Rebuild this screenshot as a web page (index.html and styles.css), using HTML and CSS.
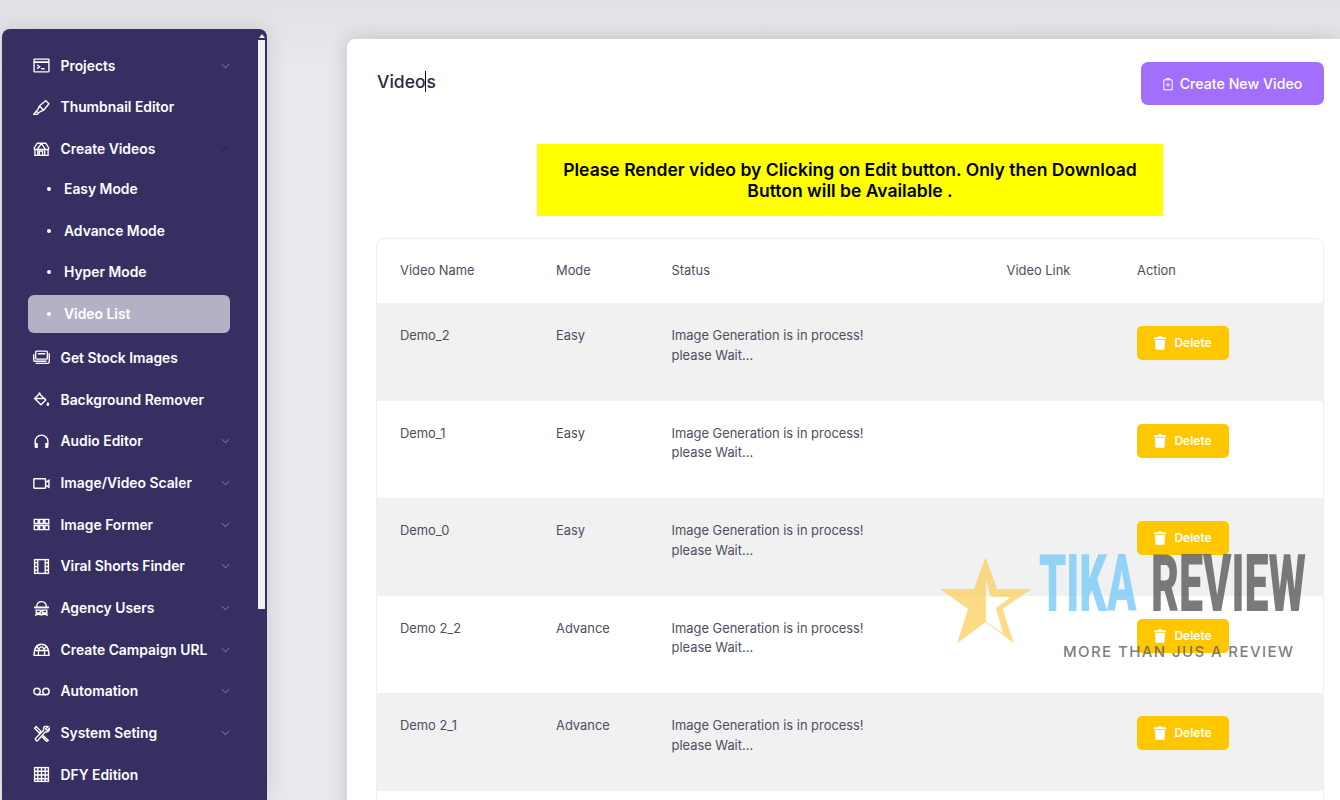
FILE: index.html
```html
<!DOCTYPE html>
<html lang="en">
<head>
<meta charset="utf-8">
<title>Videos</title>
<link rel="stylesheet" href="styles.css">
</head>
<body>
<aside class="sidebar">
  <div class="scrollbar"><span class="scroll-arrow"></span><span class="scroll-thumb"></span></div>
  <nav class="menu">
    <a class="item"><svg class="icon" viewBox="0 0 16 16"><rect x="1" y="2" width="14" height="12" rx=".6"/><path class="bar" d="M1 4.800h14"/><path d="M3.800 7.500l2.500 1.700-2.500 1.700M7.500 11h3.500"/></svg><span class="label">Projects</span><svg class="chev" viewBox="0 0 10 6"><path d="M1 1l4 4 4-4"/></svg></a>
    <a class="item"><svg class="icon" viewBox="0 0 16 16"><path d="M6 6.500L12 1.500l3 3-5 6-4-4zM6 6.500L4.500 10 3 11.500l2 2L6.500 12 10 10.500M3 11.500L.7 14.500H4l1-1"/></svg><span class="label">Thumbnail Editor</span></a>
    <a class="item"><svg class="icon" viewBox="0 0 16 16"><path d="M.8 8L4 3h8l3.200 5M.8 8l1 1h12.400l1-1M8 3.200L4.500 8v6.500h-2.700V9M4.500 8L8 3.200 11 8v6.500h3.200V9M6 14.500v-4h3v4M4.500 14.500H11"/></svg><span class="label">Create Videos</span><svg class="chev dark" viewBox="0 0 10 6"><path d="M1 5l4-4 4 4"/></svg></a>
    <a class="item sub first-sub"><i class="dot"></i><span class="label">Easy Mode</span></a>
    <a class="item sub"><i class="dot"></i><span class="label">Advance Mode</span></a>
    <a class="item sub"><i class="dot"></i><span class="label">Hyper Mode</span></a>
    <a class="item sub active"><i class="dot"></i><span class="label">Video List</span></a>
    <a class="item"><svg class="icon" viewBox="0 0 16 16"><rect x="2.500" y="2" width="11" height="7.500" rx=".8"/><path d="M.7 5v5.500a1 1 0 001 1h11M15.300 4v7.500a2 2 0 01-1 2H2.500M4.500 4.500h7"/></svg><span class="label">Get Stock Images</span></a>
    <a class="item"><svg class="icon" viewBox="0 0 16 16"><path d="M6 2.500l6 6-4.500 4.500-6-6zM2 7h9.800M5.500 1.500L7 3"/><path class="solid" d="M14 10c.8 1.200 1.300 2 1.300 2.800a1.300 1.300 0 01-2.600 0c0-.8.500-1.600 1.300-2.800z"/></svg><span class="label">Background Remover</span></a>
    <a class="item"><svg class="icon" viewBox="0 0 16 16"><path d="M2 10V8a6 6 0 0112 0v2"/><path class="solid" d="M1.500 9.500h3v4.500h-2a1 1 0 01-1-1zM14.500 9.500h-3v4.500h2a1 1 0 001-1z"/></svg><span class="label">Audio Editor</span><svg class="chev" viewBox="0 0 10 6"><path d="M1 1l4 4 4-4"/></svg></a>
    <a class="item"><svg class="icon" viewBox="0 0 16 16"><rect x=".8" y="3.500" width="11" height="9" rx=".6"/><path d="M12 7l3-2v6.500l-3-2"/></svg><span class="label">Image/Video Scaler</span><svg class="chev" viewBox="0 0 10 6"><path d="M1 1l4 4 4-4"/></svg></a>
    <a class="item"><svg class="icon" viewBox="0 0 16 16"><path d="M1.200 3.200h3.600v3.800H1.200zM6.200 3.200h3.600v3.800H6.200zM11.200 3.200h3.600v3.800h-3.600zM1.200 9h3.600v3.800H1.200zM6.200 9h3.600v3.800H6.200zM11.200 9h3.600v3.800h-3.600z"/></svg><span class="label">Image Former</span><svg class="chev" viewBox="0 0 10 6"><path d="M1 1l4 4 4-4"/></svg></a>
    <a class="item"><svg class="icon" viewBox="0 0 16 16"><rect x="1.500" y="1.500" width="13" height="13"/><path d="M4.500 1.500v13M11.500 1.500v13M1.500 4.500h3M1.500 8h3M1.500 11.500h3M11.500 4.500h3M11.500 8h3M11.500 11.500h3"/></svg><span class="label">Viral Shorts Finder</span><svg class="chev" viewBox="0 0 10 6"><path d="M1 1l4 4 4-4"/></svg></a>
    <a class="item"><svg class="icon" viewBox="0 0 16 16"><path d="M3.500 6.500C3.500 3 5 1.500 8 1.500s4.500 1.500 4.500 5"/><path class="bar" d="M1 7h14"/><path d="M3 9.500h4v2.700H3zM9 9.500h4v2.700H9zM7 10.300h2M2 14.500c2-1.400 4-1.400 6-.500 2-.9 4-.9 6 .500"/></svg><span class="label">Agency Users</span><svg class="chev" viewBox="0 0 10 6"><path d="M1 1l4 4 4-4"/></svg></a>
    <a class="item"><svg class="icon" viewBox="0 0 16 16"><path d="M1 13.500c0-7 3-10.500 7-10.500s7 3.500 7 10.500zM5 13.500c0-5 1.200-8 3-8s3 3 3 8M2 9h12M3.500 5.500L6 8M12.500 5.500L10 8"/></svg><span class="label">Create Campaign URL</span><svg class="chev" viewBox="0 0 10 6"><path d="M1 1l4 4 4-4"/></svg></a>
    <a class="item"><svg class="icon" viewBox="0 0 16 16"><circle cx="3.800" cy="8" r="3"/><circle cx="12.200" cy="8" r="3"/><path d="M3.800 11h8.400"/></svg><span class="label">Automation</span><svg class="chev" viewBox="0 0 10 6"><path d="M1 1l4 4 4-4"/></svg></a>
    <a class="item"><svg class="icon" viewBox="0 0 16 16"><path d="M1.500 3L3 1.500l4.500 4.500-1.500 1.500zM10.500 1.500c1.500-.5 3 0 3.500 0l-2 2 .5 1 1 .5 2-2c0 1.500-.5 3-2 3.500-1 .3-1.500 0-2 0L4.500 14.500c-1 1-3-1-2-2l7.500-7.500c0-.5-.3-2 .5-3.500zM9.500 10l4.800 4.500-1.500 1L8.500 11"/></svg><span class="label">System Seting</span><svg class="chev" viewBox="0 0 10 6"><path d="M1 1l4 4 4-4"/></svg></a>
    <a class="item"><svg class="icon" viewBox="0 0 16 16"><rect x="1.500" y="1.500" width="13" height="13"/><path d="M4.500 1.500v13M8 1.500v13M11.500 1.500v13M1.500 5h13M1.500 8.500h13M1.500 12h13"/></svg><span class="label">DFY Edition</span></a>
  </nav>
</aside>
<main class="card">
  <header class="card-head">
    <h1 class="title">Video<span class="caret"></span>s</h1>
    <a class="create"><svg class="create-icon" viewBox="0 0 12 16"><path d="M1 3h10v12H1zM4 3V1.500h4V3M6 7v4M4 9h4"/></svg>Create New Video</a>
  </header>
  <div class="notice">Please Render video by Clicking on Edit button. Only then Download Button will be Available .</div>
  <div class="table-box">
    <table class="videos">
      <colgroup><col class="c1"><col class="c2"><col class="c3"><col class="c4"><col class="c5"></colgroup>
      <thead><tr><th>Video Name</th><th>Mode</th><th>Status</th><th>Video Link</th><th>Action</th></tr></thead>
      <tbody>
        <tr><td>Demo_2</td><td>Easy</td><td>Image Generation is in process!<br>please Wait...</td><td></td><td><a class="del"><svg class="trash" viewBox="0 0 14 16"><path d="M5 0h4l.6 1.200H13a1 1 0 011 1V3.500H0V2.200a1 1 0 011-1h3.400zM1 4.500h12l-.7 10.100a1.500 1.500 0 01-1.500 1.400H3.200a1.500 1.500 0 01-1.500-1.400z"/></svg>Delete</a></td></tr>
        <tr><td>Demo_1</td><td>Easy</td><td>Image Generation is in process!<br>please Wait...</td><td></td><td><a class="del"><svg class="trash" viewBox="0 0 14 16"><path d="M5 0h4l.6 1.200H13a1 1 0 011 1V3.500H0V2.200a1 1 0 011-1h3.400zM1 4.500h12l-.7 10.100a1.500 1.500 0 01-1.500 1.400H3.200a1.500 1.500 0 01-1.500-1.400z"/></svg>Delete</a></td></tr>
        <tr><td>Demo_0</td><td>Easy</td><td>Image Generation is in process!<br>please Wait...</td><td></td><td><a class="del"><svg class="trash" viewBox="0 0 14 16"><path d="M5 0h4l.6 1.200H13a1 1 0 011 1V3.500H0V2.200a1 1 0 011-1h3.400zM1 4.500h12l-.7 10.100a1.500 1.500 0 01-1.500 1.400H3.200a1.500 1.500 0 01-1.500-1.400z"/></svg>Delete</a></td></tr>
        <tr><td>Demo 2_2</td><td>Advance</td><td>Image Generation is in process!<br>please Wait...</td><td></td><td><a class="del"><svg class="trash" viewBox="0 0 14 16"><path d="M5 0h4l.6 1.200H13a1 1 0 011 1V3.500H0V2.200a1 1 0 011-1h3.400zM1 4.500h12l-.7 10.100a1.500 1.500 0 01-1.500 1.400H3.200a1.500 1.500 0 01-1.500-1.400z"/></svg>Delete</a></td></tr>
        <tr><td>Demo 2_1</td><td>Advance</td><td>Image Generation is in process!<br>please Wait...</td><td></td><td><a class="del"><svg class="trash" viewBox="0 0 14 16"><path d="M5 0h4l.6 1.200H13a1 1 0 011 1V3.500H0V2.200a1 1 0 011-1h3.400zM1 4.500h12l-.7 10.100a1.500 1.500 0 01-1.500 1.400H3.200a1.500 1.500 0 01-1.500-1.400z"/></svg>Delete</a></td></tr>
        <tr><td></td><td></td><td></td><td></td><td></td></tr>
      </tbody>
    </table>
  </div>
</main>
<div class="watermark">
  <svg class="wm-star" viewBox="0 0 92 88"><path fill-rule="evenodd" d="M45.500 0L57 32H91.500L62.500 52 74 86.500 45.500 65 17 86.500 28 52 0 32H34zM46 23V64.500L63 76.500 56 51 71 40H51z"/></svg>
  <span class="wm-word wm-tika">TIKA</span>
  <span class="wm-word wm-review">REVIEW</span>
  <span class="wm-tag">MORE THAN JUS A REVIEW</span>
</div>
</body>
</html>
```
FILE: styles.css
```css
* { box-sizing: border-box; }
html, body { height: 100%; }
body {
  margin: 0;
  height: 800px;
  overflow: hidden;
  display: flex;
  align-items: flex-start;
  background: linear-gradient(#e1e2e6, #e8eaed 70px);
  font-family: "Inter", "Liberation Sans", sans-serif;
  position: relative;
}
.sidebar {
  position: relative;
  flex: 0 0 265px;
  height: 771px;
  margin: 29px 0 0 2px;
  background: #372f61;
  border-radius: 8px 8px 0 0;
  box-shadow: 0 0 24px rgba(0, 0, 0, .14);
  overflow: hidden;
}
.scrollbar {
  position: absolute;
  top: 0;
  left: 256px;
  width: 7px;
  height: 580px;
}
.scroll-arrow {
  position: absolute;
  top: 5px;
  left: 1px;
  border-left: 3px solid transparent;
  border-right: 3px solid transparent;
  border-bottom: 4px solid #f0f0f7;
}
.scroll-thumb {
  position: absolute;
  top: 11px;
  left: 0;
  width: 7px;
  height: 569px;
  background: #f0f0f7;
}
.menu {
  display: flex;
  flex-direction: column;
  padding: 15.700px 37px 0 26px;
}
.item {
  display: flex;
  align-items: center;
  height: 41.700px;
  color: #fff;
  font-size: 13.860px;
  font-weight: 600;
  white-space: nowrap;
}
.icon {
  flex: 0 0 17px;
  width: 17px;
  height: 17px;
  margin: 0 10.500px 0 5px;
  fill: none;
  stroke: #fff;
  stroke-width: 1.300;
}
.icon .solid { fill: #fff; stroke: none; }
.icon .bar { stroke-width: 1.800; }
.label { flex: 1; }
.chev {
  flex: 0 0 9px;
  width: 9px;
  height: 6px;
  margin-right: 0;
  fill: none;
  stroke: #8d88a8;
  stroke-width: 1.100;
}
.chev.dark { stroke: #1e1a3b; }
.sub { padding-left: 19px; }
.first-sub { margin-top: -1.700px; }
.dot {
  flex: 0 0 4px;
  width: 4px;
  height: 4px;
  margin-right: 13px;
  border-radius: 50%;
  background: #fff;
}
.active {
  height: 38px;
  margin: 2.300px 0 3.700px;
  background: #b5b1c5;
  border-radius: 6px;
}
.card {
  flex: 1;
  min-width: 0;
  margin: 39px 0 0 80px;
  padding: 23px 16px 0 30px;
  height: 900px;
  background: #fff;
  border-radius: 8px 0 0 0;
  box-shadow: 0 0 22px rgba(0, 0, 0, .18);
}
.card-head {
  display: flex;
  justify-content: space-between;
  align-items: flex-start;
  height: 82px;
}
.title {
  margin: 9px 0 0;
  font-size: 17.500px;
  line-height: 22px;
  font-weight: 500;
  color: #2a2c44;
}
.caret {
  display: inline-block;
  width: 0;
  height: 21px;
  margin-bottom: -4px;
  border-left: 1px solid #111;
}
.create {
  display: flex;
  align-items: center;
  justify-content: center;
  width: 183px;
  height: 43px;
  background: #a26ffd;
  border-radius: 7px;
  color: #fff;
  font-size: 14.200px;
  font-weight: 500;
}
.create-icon {
  width: 10px;
  height: 14px;
  margin-right: 7px;
  fill: none;
  stroke: #fff;
  stroke-width: 1.200;
}
.notice {
  width: 626px;
  height: 72px;
  margin: 0 0 21.500px 160px;
  padding: 15px 0 0;
  background: #ffff00;
  color: #000;
  font-size: 17.550px;
  line-height: 21px;
  font-weight: 600;
  text-align: center;
}
.table-box {
  width: 948px;
  margin-left: -1px;
  border: 1px solid #eeeeee;
  border-radius: 8px;
  overflow: hidden;
}
.videos {
  width: 100%;
  table-layout: fixed;
  border-collapse: collapse;
  color: #4c4f60;
  font-size: 12.900px;
  line-height: 19.500px;
}
.c1 { width: 156px; }
.c2 { width: 115.500px; }
.c3 { width: 335px; }
.c4 { width: 130.500px; }
th {
  height: 64.500px;
  padding: .5px 0 0 23px;
  text-align: left;
  font-weight: 400;
}
td {
  height: 97.500px;
  padding: 23px 0 0 23px;
  vertical-align: top;
}
tbody tr:nth-child(odd) { background: #f1f1f1; }
.del {
  display: inline-flex;
  align-items: center;
  justify-content: center;
  width: 92px;
  height: 34px;
  background: #ffc700;
  border-radius: 5px;
  color: #fff;
  font-size: 12px;
  font-weight: 600;
  line-height: 1;
}
.trash {
  width: 12px;
  height: 14px;
  margin-right: 8px;
  fill: #fff;
}
.watermark {
  position: absolute;
  left: 940px;
  top: 555px;
  width: 370px;
  height: 110px;
  pointer-events: none;
}
.wm-star {
  position: absolute;
  left: 0;
  top: 2px;
  width: 92px;
  height: 88px;
  fill: rgba(251, 205, 84, .7);
}
.wm-word {
  position: absolute;
  top: -13px;
  font-family: "Roboto", "Liberation Sans", sans-serif;
  font-size: 80px;
  line-height: 84px;
  font-weight: 900;
  transform-origin: 0 0;
  white-space: nowrap;
}
.wm-tika { left: 98.500px; color: rgba(120, 201, 248, .78); transform: scaleX(.54); }
.wm-review { left: 211px; color: rgba(90, 90, 90, .8); transform: scaleX(.537); }
.wm-tag {
  position: absolute;
  left: 123px;
  top: 87px;
  font-size: 15px;
  line-height: 20px;
  font-weight: 500;
  letter-spacing: 1.400px;
  color: rgba(90, 90, 90, .8);
  white-space: nowrap;
}
```
